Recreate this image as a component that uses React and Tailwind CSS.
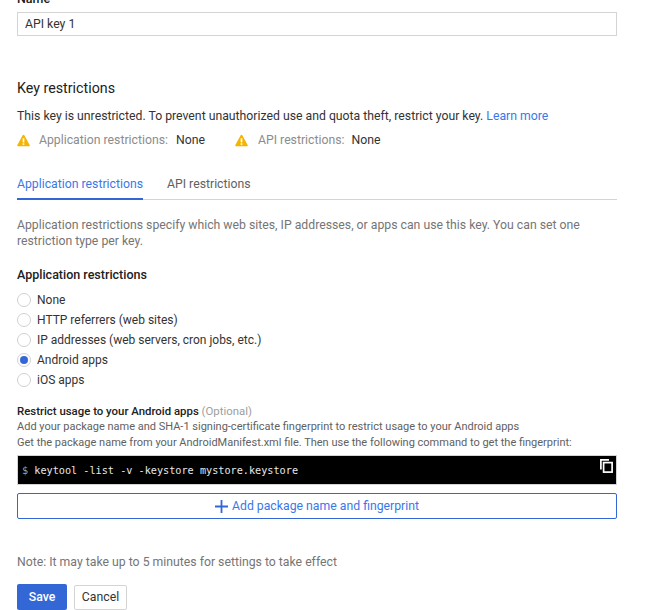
import React from 'react'

const radios = [
  { label: 'None' },
  { label: 'HTTP referrers (web sites)' },
  { label: 'IP addresses (web servers, cron jobs, etc.)' },
  { label: 'Android apps', checked: true },
  { label: 'iOS apps' },
]

const Warning = () => (
  <svg width="13" height="13" viewBox="0 0 14 14" className="shrink-0 block">
    <path d="M7 0.8c.4 0 .7.2.9.5l5.7 10.6c.4.7-.1 1.4-.9 1.4H1.3c-.8 0-1.3-.7-.9-1.4L6.1 1.3c.2-.3.5-.5.9-.5z" fill="#f4b400" />
    <rect x="6.1" y="4.6" width="1.8" height="4.4" fill="#fff" />
    <rect x="6.1" y="10" width="1.8" height="1.7" fill="#fff" />
  </svg>
)

const Radio = ({ label, checked }) => (
  <div className="flex items-center h-5">
    <span className="w-[14px] h-[14px] rounded-full border border-[#d0d0d0] flex items-center justify-center shrink-0">
      {checked && <span className="w-2 h-2 rounded-full bg-[#3367d6]"></span>}
    </span>
    <span className="ml-[6px] text-[12px] text-[#333]">{label}</span>
  </div>
)

const App = () => {
  return (
    <div className="w-[665px] h-[610px] overflow-hidden bg-white text-[12.25px] text-[#333] font-['Roboto',sans-serif]">
      <div className="w-[600px] ml-[17px] -mt-[11px]">
        {/* Name */}
        <div className="h-[23px] leading-[19px] text-[12.5px] font-medium text-[#212121]">Name</div>
        <div className="h-6 border border-[#d4d4d4] pl-[7px] leading-[22px] text-[#333]">API key 1</div>

        {/* Key restrictions */}
        <h2 className="mt-[42px] h-5 leading-5 text-[14.25px] text-[#212121]">Key restrictions</h2>
        <p className="mt-[8px] h-5 leading-5 text-[#333] whitespace-nowrap">
          This key is unrestricted. To prevent unauthorized use and quota theft, restrict your key.{' '}
          <span className="text-[#3b78e7]">Learn more</span>
        </p>
        <div className="mt-1 h-5 flex items-center">
          <Warning />
          <span className="ml-[9px] text-[#8c8c8c]">Application restrictions:</span>
          <span className="ml-2">None</span>
          <span className="ml-[30px]"><Warning /></span>
          <span className="ml-[10px] text-[#8c8c8c]">API restrictions:</span>
          <span className="ml-[7px]">None</span>
        </div>

        {/* Tabs */}
        <div className="mt-[23px] h-[27px] flex border-b border-[#d4d4d4]">
          <div className="h-[27px] border-b-2 border-[#3367d6] text-[#3b78e7] leading-[22px]">Application restrictions</div>
          <div className="ml-6 text-[#616161] leading-[22px]">API restrictions</div>
        </div>

        <p className="mt-[17px] leading-4 text-[#757575]">
          Application restrictions specify which web sites, IP addresses, or apps can use this key. You can set one restriction type per key.
        </p>

        {/* Radios */}
        <div className="mt-4 h-5 leading-5 text-[12.5px] font-medium text-[#212121]">Application restrictions</div>
        <div className="mt-[5px] flex flex-col">
          {radios.map((item, index) => (
            <Radio key={index} label={item.label} checked={item.checked} />
          ))}
        </div>

        {/* Android */}
        <div className="mt-[13px] text-[11px] leading-4">
          <div className="font-medium text-[11.4px] text-[#212121]">
            Restrict usage to your Android apps <span className="font-normal text-[#9e9e9e]">(Optional)</span>
          </div>
          <div className="text-[#616161]">Add your package name and SHA-1 signing-certificate fingerprint to restrict usage to your Android apps</div>
          <div className="text-[#616161]">Get the package name from your AndroidManifest.xml file. Then use the following command to get the fingerprint:</div>
        </div>
        <div className="mt-1 h-[30px] bg-black border border-[#d4d4d4] flex items-center justify-between pl-1 pt-px font-['DejaVu_Sans_Mono',monospace] text-[10.2px] text-[#e8e8e8]">
          <span className="whitespace-pre"><span className="text-[#9e9e9e]">$</span> keytool -list -v -keystore mystore.keystore</span>
          <svg width="13" height="14" viewBox="0 0 13 14" fill="none" stroke="#fff" strokeWidth="1.7" className="self-start mt-[2px] mr-[3px]">
            <path d="M0.9 10.5V0.9H9" />
            <rect x="3.6" y="3.6" width="8.5" height="9.5" />
          </svg>
        </div>
        <div className="mt-[8px] h-[26px] border border-[#3367d6] rounded-[2px] flex items-center justify-center text-[#3b78e7]">
          <svg width="13" height="13" viewBox="0 0 13 13" className="mr-[4px]">
            <path d="M5.6 0h1.8v5.6H13v1.8H7.4V13H5.6V7.4H0V5.6h5.6z" fill="#3367d6" />
          </svg>
          Add package name and fingerprint
        </div>

        <p className="mt-[33px] h-5 leading-5 text-[#757575]">Note: It may take up to 5 minutes for settings to take effect</p>

        {/* Actions */}
        <div className="mt-3 flex items-center">
          <button className="w-[50px] h-[26px] rounded-[2px] bg-[#3367d6] text-white font-medium">Save</button>
          <button className="ml-[7px] w-[53px] h-[25px] rounded-[2px] border border-[#d4d4d4] bg-white text-[#333]">Cancel</button>
        </div>
      </div>
    </div>
  )
}

export default App
